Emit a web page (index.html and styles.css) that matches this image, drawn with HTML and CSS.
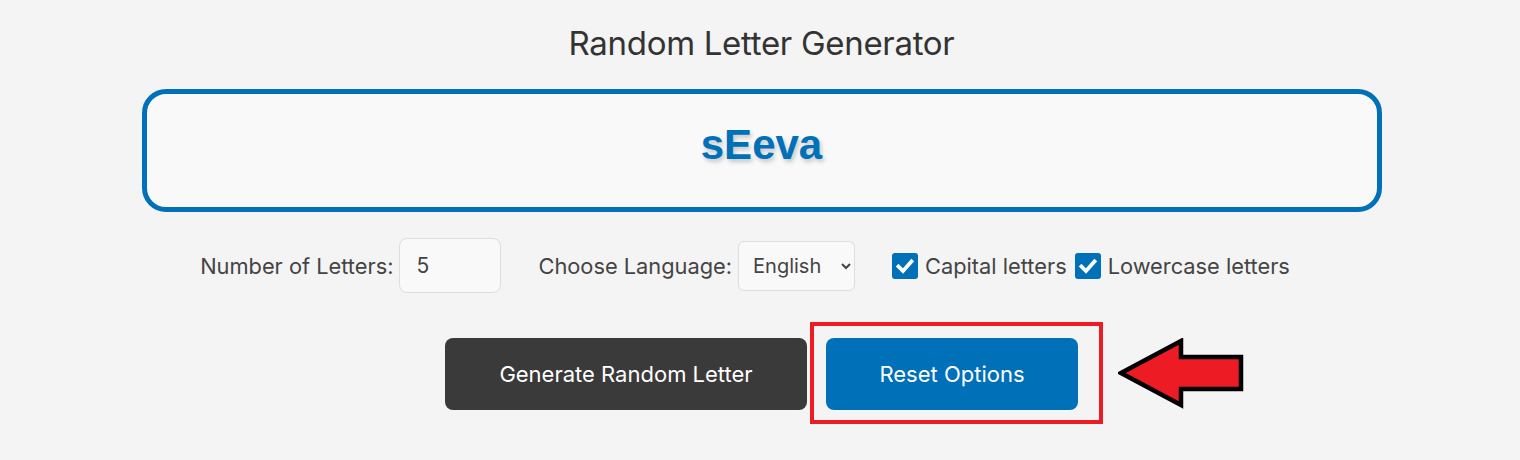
FILE: index.html
```html
<!DOCTYPE html>
<html lang="en">
<head>
<meta charset="utf-8">
<title>Random Letter Generator</title>
<link rel="stylesheet" href="styles.css">
</head>
<body>
<main class="page">
  <h1 class="title">Random Letter Generator</h1>
  <div class="output"><span class="result">sEeva</span></div>
  <div class="controls">
    <label class="field">Number of Letters: <input class="num" type="text" value="5"></label>
    <label class="field">Choose Language: <select class="lang"><option>English</option></select></label>
    <div class="checks">
      <label class="check"><span class="box"><svg viewBox="0 0 26 26" width="26" height="26"><path d="M6.5 13.5 L11 18 L19.5 8.5" fill="none" stroke="#fff" stroke-width="3.8" stroke-linecap="square"/></svg></span>Capital letters</label>
      <label class="check"><span class="box"><svg viewBox="0 0 26 26" width="26" height="26"><path d="M6.5 13.5 L11 18 L19.5 8.5" fill="none" stroke="#fff" stroke-width="3.8" stroke-linecap="square"/></svg></span>Lowercase letters</label>
    </div>
  </div>
  <div class="buttons">
    <button class="btn btn-dark">Generate Random Letter</button>
    <div class="reset-wrap">
      <button class="btn btn-blue">Reset Options</button>
      <span class="highlight"></span>
      <svg class="arrow" viewBox="0 0 128 72" width="128" height="72"><path d="M3 35 L63 3 L63 19 L123 19 L123 51 L63 51 L63 67 Z" fill="#ed1c24" stroke="#000" stroke-width="4.5" stroke-linejoin="miter"/></svg>
    </div>
  </div>
</main>
</body>
</html>
```

FILE: styles.css
```css
* { box-sizing: border-box; }
html, body { margin: 0; background: #f4f4f4; }
body {
  font-family: Inter, "Noto Sans", sans-serif;
  color: #333;
  padding-left: 3px;
  min-height: 100vh;
}
.page {
  display: flex;
  flex-direction: column;
  align-items: center;
  padding-bottom: 40px;
}
.title {
  margin: 23px 0 0;
  font-size: 33px;
  line-height: 40px;
  font-weight: 400;
  color: #333;
  letter-spacing: -0.3px;
}
.output {
  margin-top: 26px;
  width: 1240px;
  height: 123px;
  border: 5px solid #0070b8;
  border-radius: 24px;
  background: #f9f9f9;
  display: flex;
  align-items: center;
  justify-content: center;
}
.result {
  font-family: "Liberation Sans", Arial, sans-serif;
  font-weight: 700;
  font-size: 42px;
  color: #0070b8;
  text-shadow: 2px 3px 4px rgba(0,0,0,0.2);
  position: relative;
  top: -6px;
}
.controls {
  margin-top: 26px;
  display: flex;
  align-items: center;
  gap: 37px;
  padding-right: 33px;
  font-size: 21.8px;
  color: #444;
}
.field {
  display: flex;
  align-items: center;
  gap: 6px;
}
.num {
  width: 102px;
  height: 55px;
  border: 1px solid #ddd;
  border-radius: 8px;
  background: #f9f9f9;
  padding: 0 16px;
  font: inherit;
  font-size: 21px;
  color: #444;
}
.lang {
  width: 117px;
  height: 50px;
  border: 1px solid #ddd;
  border-radius: 6px;
  background: #f9f9f9;
  padding: 0 6px 0 10px;
  font: inherit;
  font-size: 20px;
  color: #444;
}
.checks {
  display: flex;
  align-items: center;
  gap: 8px;
}
.check {
  display: flex;
  align-items: center;
  gap: 7px;
}
.box {
  width: 26px;
  height: 26px;
  border-radius: 3px;
  background: #0070b8;
  display: flex;
}
.buttons {
  margin-top: 45px;
  display: flex;
  gap: 19px;
}
.btn {
  display: block;
  height: 72px;
  border: none;
  border-radius: 8px;
  color: #fff;
  font-family: Inter, "Noto Sans", sans-serif;
  font-size: 22px;
  cursor: pointer;
}
.btn-dark { width: 362px; background: #3a3a3a; }
.btn-blue { width: 252px; background: #0070b8; }
.reset-wrap { position: relative; }
.highlight {
  position: absolute;
  left: -16px;
  top: -16px;
  width: 293px;
  height: 102px;
  border: 4px solid #ed1c24;
}
.arrow {
  position: absolute;
  left: 292px;
  top: 0;
}
```
